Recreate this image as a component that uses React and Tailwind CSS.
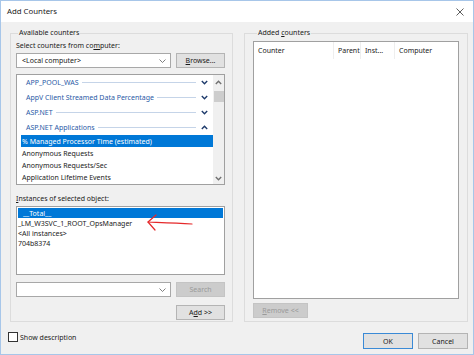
import React from "react";

const font = { fontFamily: '"Noto Sans", "Open Sans", sans-serif' };

function Chevron({ up, className }) {
    return (
        <svg width="7" height="5" viewBox="0 0 7 5" className={className}>
            <path
                d={up ? "M0.8 4 L3.5 1.3 L6.2 4" : "M0.8 1 L3.5 3.7 L6.2 1"}
                fill="none"
                stroke="currentColor"
                strokeWidth="1.4"
            />
        </svg>
    );
}

function ThinChevron() {
    return (
        <svg width="7" height="4" viewBox="0 0 7 4" className="text-[#606060]">
            <path d="M0.5 0.5 L3.5 3.5 L6.5 0.5" fill="none" stroke="currentColor" strokeWidth="0.8" />
        </svg>
    );
}

function Combo({ value }) {
    return (
        <div className="w-[155px] h-[15px] bg-white border border-[#a8a8a8] flex items-center justify-between pl-[5px] pr-[4px]">
            <span className="text-[7px] text-[#1a1a1a] leading-none">{value}</span>
            <ThinChevron />
        </div>
    );
}

function Button({ children, disabled, primary, className = "" }) {
    return (
        <div
            className={`h-[15px] flex items-center justify-center text-[7px] leading-none border ${
                disabled
                    ? "bg-[#cccccc] border-[#c4c4c4] text-[#9a9a9a]"
                    : primary
                    ? "bg-[#e1e1e1] border-[#3a8ad6] text-[#1a1a1a]"
                    : "bg-[#e1e1e1] border-[#b4b4b4] text-[#1a1a1a]"
            } ${className}`}
        >
            {children}
        </div>
    );
}

const categories = [
    { name: "APP_POOL_WAS", open: false },
    { name: "AppV Client Streamed Data Percentage", open: false },
    { name: "ASP.NET", open: false },
    { name: "ASP.NET Applications", open: true },
];

const counters = [
    "Anonymous Requests",
    "Anonymous Requests/Sec",
    "Application Lifetime Events",
];

function CounterList() {
    return (
        <div className="w-[209px] h-[111px] mt-[6px] bg-white border border-[#a0a0a0] flex">
            <div className="flex-1 flex flex-col">
                {categories.map((c) => (
                    <div key={c.name} className="h-[15px] flex items-center pl-[9px] pr-[5px] gap-[3px]">
                        <span className="text-[7px] leading-none text-[#2a5aa6] whitespace-nowrap">{c.name}</span>
                        <div className="flex-1 h-px bg-[#c5d4e8]" />
                        <Chevron up={c.open} className="text-[#1d3a6b] ml-[2px]" />
                    </div>
                ))}
                <div className="h-[12px] ml-[4px] pl-[1px] bg-[#0078d7] flex items-center">
                    <span className="text-[7px] leading-none text-white whitespace-nowrap">
                        % Managed Processor Time (estimated)
                    </span>
                </div>
                {counters.map((c) => (
                    <div key={c} className="h-[12px] pl-[5px] flex items-center">
                        <span className="text-[7px] leading-none text-[#1a1a1a] whitespace-nowrap">{c}</span>
                    </div>
                ))}
            </div>
            <div className="w-[11px] bg-[#f0f0f0] flex flex-col items-center">
                <Chevron up className="text-[#707070] mt-[5px]" />
                <div className="w-[10px] h-[11px] bg-[#cdcdcd] mt-[6px]" />
                <div className="flex-1" />
                <Chevron className="text-[#707070] mb-[3px]" />
            </div>
        </div>
    );
}

function InstanceList() {
    const rows = ["_LM_W3SVC_1_ROOT_OpsManager", "<All instances>", "704b8374"];
    return (
        <div className="relative w-[209px] h-[69px] mt-[2px] bg-white border border-[#a0a0a0] p-px">
            <div className="h-[10px] bg-[#0078d7] pl-[5px] flex items-center">
                <span className="text-[7px] leading-none text-white">__Total__</span>
            </div>
            {rows.map((r) => (
                <div key={r} className="h-[10px] flex items-center">
                    <span className="text-[7px] leading-none text-[#1a1a1a] whitespace-nowrap">{r}</span>
                </div>
            ))}
            <svg
                className="absolute left-[128px] top-[6px]"
                width="50"
                height="20"
                viewBox="0 0 50 20"
            >
                <path
                    d="M3 9 C 15 9.5, 30 10, 47 11"
                    fill="none"
                    stroke="#e5282a"
                    strokeWidth="1.2"
                    strokeLinecap="round"
                />
                <path
                    d="M11 2 L3 9 L10 17"
                    fill="none"
                    stroke="#e5282a"
                    strokeWidth="1.2"
                    strokeLinecap="round"
                    strokeLinejoin="round"
                />
            </svg>
        </div>
    );
}

function AddedList() {
    const cols = [
        { label: "Counter", w: "w-[80px]" },
        { label: "Parent", w: "w-[27px]" },
        { label: "Inst...", w: "w-[34px]" },
        { label: "Computer", w: "w-[50px]" },
    ];
    return (
        <div className="w-[206px] h-[258px] bg-white border border-[#a0a0a0]">
            <div className="h-[17px] flex">
                {cols.map((c, i) => (
                    <div
                        key={c.label}
                        className={`${c.w} h-full flex items-center pl-[4px] ${
                            i < 3 ? "border-r border-[#eeeeee]" : ""
                        }`}
                    >
                        <span className="text-[7px] leading-none text-[#1a1a1a]">{c.label}</span>
                    </div>
                ))}
            </div>
        </div>
    );
}

export default function App() {
    return (
        <div
            style={font}
            className="w-[474px] h-[355px] bg-[#f0f0f0] border border-[#a7c6e9] flex flex-col overflow-hidden"
        >
            {/* Title bar */}
            <div className="h-[21px] bg-white flex items-center justify-between pl-[6px] pr-[9px]">
                <span className="text-[7.8px] text-[#1a1a1a]">Add Counters</span>
                <svg width="8" height="8" viewBox="0 0 8 8">
                    <path d="M0.5 0.5 L7.5 7.5 M7.5 0.5 L0.5 7.5" stroke="#333" strokeWidth="0.8" />
                </svg>
            </div>

            <div className="flex pt-[6px]">
                {/* Available counters */}
                <fieldset className="ml-[9px] w-[223px] h-[294px] border border-[#dcdcdc] pl-[5px]">
                    <legend className="ml-[2px] px-px text-[7px] leading-[10px] text-[#1a1a1a]">
                        Available counters
                    </legend>
                    <div className="text-[7px] leading-[10px] text-[#1a1a1a] mt-[3px]">
                        Select counters from co<span className="underline">m</span>puter:
                    </div>
                    <div className="flex gap-[5px] mt-[2px]">
                        <Combo value="<Local computer>" />
                        <Button className="w-[49px]">
                            <span className="underline">B</span>rowse...
                        </Button>
                    </div>
                    <CounterList />
                    <div className="text-[7px] leading-[10px] text-[#1a1a1a] mt-[9px]">
                        <span className="underline">I</span>nstances of selected object:
                    </div>
                    <InstanceList />
                    <div className="flex gap-[5px] mt-[7px]">
                        <Combo value="" />
                        <Button disabled className="w-[49px]">
                            Search
                        </Button>
                    </div>
                    <div className="flex justify-end mt-[8px] mr-[7px]">
                        <Button className="w-[49px]">
                            A<span className="underline">d</span>d &gt;&gt;
                        </Button>
                    </div>
                </fieldset>

                {/* Added counters */}
                <fieldset className="ml-[11px] w-[224px] h-[294px] border border-[#dcdcdc] pl-[8px]">
                    <legend className="ml-[4px] px-px text-[7px] leading-[10px] text-[#1a1a1a]">
                        Added <span className="underline">c</span>ounters
                    </legend>
                    <div className="mt-[3px]">
                        <AddedList />
                    </div>
                    <div className="mt-[4px]">
                        <Button disabled className="w-[55px]">
                            <span className="underline">R</span>emove &lt;&lt;
                        </Button>
                    </div>
                </fieldset>
            </div>

            {/* Bottom row */}
            <div className="flex items-start mt-[9px]">
                <div className="flex items-center ml-[7px] mt-px gap-[2px]">
                    <div className="w-[10px] h-[10px] bg-white border border-[#333333]" />
                    <span className="text-[7px] leading-none text-[#1a1a1a]">Show description</span>
                </div>
                <div className="flex-1" />
                <div className="flex gap-[5px] mr-[5px] mt-[2px]">
                    <Button primary className="w-[50px] h-[16px]">
                        OK
                    </Button>
                    <Button className="w-[50px] h-[16px]">Cancel</Button>
                </div>
            </div>
        </div>
    );
}
